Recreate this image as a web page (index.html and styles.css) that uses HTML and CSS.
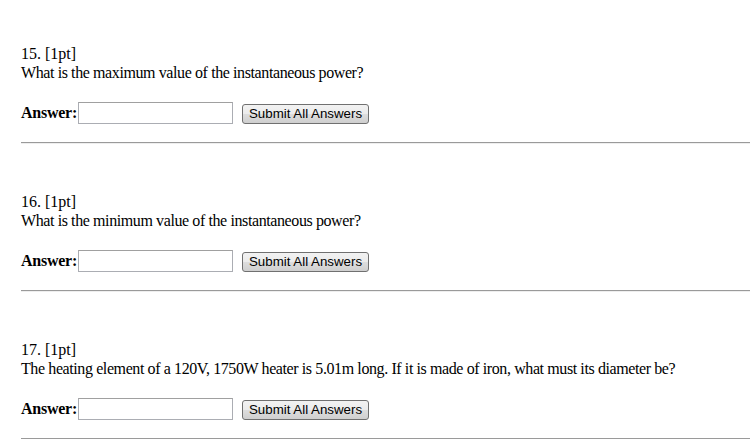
FILE: index.html
```html
<!DOCTYPE html>
<html>
<head>
<meta charset="utf-8">
<link rel="stylesheet" href="styles.css">
</head>
<body>
<div class="page">
  <div class="q">
    <div class="title">15. [1pt]</div>
    <div class="text">What is the maximum value of the instantaneous power?</div>
    <div class="answer"><b class="label">Answer:</b><input class="field" type="text"><button class="submit">Submit All Answers</button></div>
    <hr class="rule">
  </div>
  <div class="q">
    <div class="title">16. [1pt]</div>
    <div class="text">What is the minimum value of the instantaneous power?</div>
    <div class="answer"><b class="label">Answer:</b><input class="field" type="text"><button class="submit">Submit All Answers</button></div>
    <hr class="rule">
  </div>
  <div class="q">
    <div class="title">17. [1pt]</div>
    <div class="text">The heating element of a 120V, 1750W heater is 5.01m long. If it is made of iron, what must its diameter be?</div>
    <div class="answer"><b class="label">Answer:</b><input class="field" type="text"><button class="submit">Submit All Answers</button></div>
    <hr class="rule">
  </div>
</div>
</body>
</html>
```
FILE: styles.css
```css
html, body {
  margin: 0;
  padding: 0;
  background: #fff;
  overflow: hidden;
}
.page {
  padding: 45px 0 0 21px;
  font-family: "Liberation Serif", "Times New Roman", serif;
  font-size: 16px;
  color: #000;
  display: flex;
  flex-direction: column;
}
.q {
  display: flex;
  flex-direction: column;
}
.title {
  line-height: 18px;
  white-space: nowrap;
}
.text {
  line-height: 19px;
  white-space: nowrap;
  letter-spacing: -0.4px;
}
.answer {
  margin-top: 20px;
  height: 22px;
  display: flex;
  align-items: center;
}
.label {
  font-weight: bold;
  letter-spacing: -0.25px;
  margin-right: 1px;
}
.field {
  box-sizing: border-box;
  width: 155px;
  height: 22px;
  margin: 0;
  border: 1px solid #abadb3;
  border-top-color: #a0a0a0;
  padding: 0 2px;
  background: #fff;
}
.submit {
  box-sizing: border-box;
  margin: 1px 0 0 9px;
  width: 127px;
  height: 20px;
  padding: 0;
  font-family: "Liberation Sans", Arial, sans-serif;
  font-size: 13.3px;
  color: #000;
  border: 1px solid #707070;
  border-radius: 3px;
  background: linear-gradient(#f2f2f2 0%, #ebebeb 50%, #dddddd 51%, #cfcfcf 100%);
}
.rule {
  margin: 18px 0 49px 0;
  height: 0;
  border: 0;
  border-top: 1px solid #9a9a9a;
  border-bottom: 1px solid #eeeeee;
}
```
